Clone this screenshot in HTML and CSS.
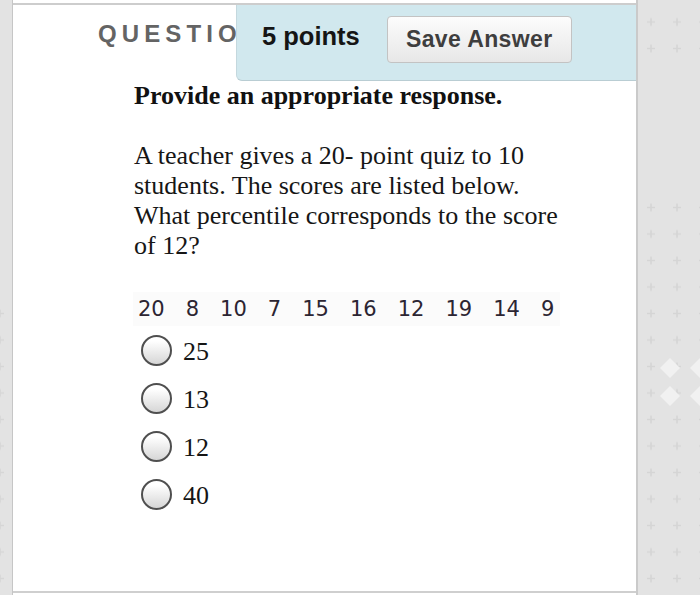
FILE: index.html
```html
<!DOCTYPE html>
<html lang="en">
<head>
<meta charset="utf-8">
<title>Question</title>
<link rel="stylesheet" href="styles.css">
</head>
<body>
<div class="screen">
  <div class="gutter gutter-left">
    <svg class="pattern" width="12" height="595" viewBox="0 0 12 595">
      <defs>
        <pattern id="plusL" x="-13" y="8.75" width="26" height="26.5" patternUnits="userSpaceOnUse">
          <path d="M9 13.25H17M13 9.25V17.25" stroke="#d6d6d6" stroke-width="1.6" fill="none"/>
        </pattern>
      </defs>
      <rect x="0" y="300" width="12" height="295" fill="url(#plusL)"/>
    </svg>
  </div>

  <div class="panel">
    <div class="rule"></div>
    <div class="header">
      <div class="qlabel">QUESTIO</div>
      <div class="points-bar">
        <div class="points">5 points</div>
        <button class="save" type="button">Save Answer</button>
      </div>
    </div>

    <div class="content">
      <h2 class="instr">Provide an appropriate response.</h2>
      <p class="question">A teacher gives a 20- point quiz to 10 students. The scores are listed below. What percentile corresponds to the score of 12?</p>

      <div class="scores">
        <span>20</span><span>8</span><span>10</span><span>7</span><span>15</span><span>16</span><span>12</span><span>19</span><span>14</span><span>9</span>
      </div>

      <ul class="options">
        <li class="option"><span class="radio"></span><span class="opt-label">25</span></li>
        <li class="option"><span class="radio"></span><span class="opt-label">13</span></li>
        <li class="option"><span class="radio"></span><span class="opt-label">12</span></li>
        <li class="option"><span class="radio"></span><span class="opt-label">40</span></li>
      </ul>
    </div>
    <div class="rule rule-bottom"></div>
  </div>

  <div class="gutter gutter-right">
    <svg class="pattern" width="62" height="595" viewBox="0 0 62 595">
      <defs>
        <pattern id="plusR" x="0" y="8.75" width="26" height="26.5" patternUnits="userSpaceOnUse">
          <path d="M9 13.25H17M13 9.25V17.25" stroke="#d5d5d5" stroke-width="1.6" fill="none"/>
        </pattern>
      </defs>
      <rect x="0" y="0" width="62" height="60" fill="url(#plusR)"/>
      <rect x="0" y="190" width="62" height="405" fill="url(#plusR)"/>
      <path d="M32 358L42 368L32 378L22 368Z" fill="#f1f1f1"/>
      <path d="M32 386L42 396L32 406L22 396Z" fill="#f1f1f1"/>
      <path d="M62 358L72 368L62 378L52 368Z" fill="#f1f1f1"/>
      <path d="M62 386L72 396L62 406L52 396Z" fill="#f1f1f1"/>
    </svg>
  </div>
</div>
</body>
</html>
```

FILE: styles.css
```css
html, body {
  margin: 0;
  padding: 0;
}

body {
  background: #e3e3e3;
}

.screen {
  display: flex;
  width: 700px;
  height: 595px;
  overflow: hidden;
  background: #e3e3e3;
}

.gutter {
  flex: none;
  overflow: hidden;
}

.gutter-left {
  width: 12px;
}

.gutter-right {
  flex: 1;
}

.pattern {
  display: block;
}

.panel {
  flex: none;
  width: 626px;
  box-sizing: border-box;
  height: 595px;
  background: #ffffff;
  border-left: 1px solid #c6c6c6;
  border-right: 2px solid #cacaca;
  display: flex;
  flex-direction: column;
}

.rule {
  height: 2px;
  margin-top: 3px;
  background: #cdcdcd;
  flex: none;
}

.rule-bottom {
  margin-top: 0;
  margin-bottom: 2px;
  background: #cfcfcf;
}

.header {
  display: flex;
  height: 76px;
  flex: none;
}

.qlabel {
  width: 223px;
  flex: none;
  box-sizing: border-box;
  padding-left: 85px;
  padding-top: 14px;
  font-family: "Liberation Sans", Arial, sans-serif;
  font-weight: bold;
  font-size: 24px;
  line-height: 30px;
  letter-spacing: 5.1px;
  color: #646464;
  white-space: nowrap;
}

.points-bar {
  flex: 1;
  display: flex;
  align-items: flex-start;
  background: #d1e8ee;
  border-bottom: 1px solid #b9cdd3;
  border-left: 1px solid #c4d8de;
  border-bottom-left-radius: 6px;
  box-sizing: border-box;
  padding-left: 25px;
}

.points {
  padding-top: 16px;
  font-family: "Liberation Sans", Arial, sans-serif;
  font-weight: bold;
  font-size: 25.5px;
  line-height: 30px;
  color: #151515;
  white-space: nowrap;
}

.save {
  margin-top: 11px;
  margin-left: 27px;
  width: 185px;
  height: 47px;
  padding: 0;
  border: 1px solid #c3c3c3;
  border-radius: 4px;
  background: linear-gradient(#fcfcfc, #e7e7e7);
  font-family: "Liberation Sans", Arial, sans-serif;
  font-weight: bold;
  font-size: 23px;
  color: #3e3e3e;
  letter-spacing: 0.4px;
}

.content {
  flex: 1;
  padding-left: 121px;
}

.instr {
  margin: 0;
  font-family: "Liberation Serif", "Times New Roman", serif;
  font-weight: bold;
  font-size: 26px;
  line-height: 30px;
  color: #111111;
}

.question {
  margin: 30px 0 0;
  width: 440px;
  font-family: "Liberation Serif", "Times New Roman", serif;
  font-size: 26px;
  line-height: 30px;
  color: #161616;
}

.scores {
  display: flex;
  gap: 21px;
  width: fit-content;
  margin: 31px 0 0 -1px;
  padding: 0 6px 0 5px;
  background: #fbfbfb;
  font-family: "DejaVu Sans", Verdana, sans-serif;
  font-size: 21px;
  line-height: 34px;
  color: #2c2532;
}

.options {
  list-style: none;
  margin: 0;
  padding: 0;
}

.option {
  display: flex;
  align-items: center;
  height: 48px;
}

.radio {
  width: 31px;
  height: 31px;
  box-sizing: border-box;
  margin-left: 7px;
  border: 2px solid #4f4f4f;
  border-radius: 50%;
  background: linear-gradient(#ffffff 15%, #d6d6d6);
  flex: none;
}

.opt-label {
  margin-left: 11px;
  padding-top: 4px;
  font-family: "Liberation Serif", "Times New Roman", serif;
  font-size: 26px;
  line-height: 30px;
  color: #151515;
}
```
